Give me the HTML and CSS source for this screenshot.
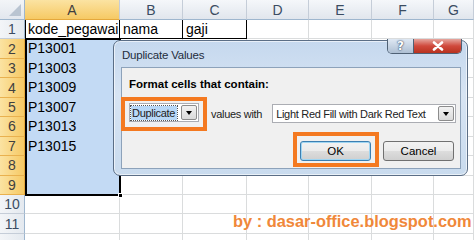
FILE: index.html
```html
<!DOCTYPE html>
<html>
<head>
<meta charset="utf-8">
<link rel="stylesheet" href="styles.css">
</head>
<body>
<div class="screen">
  <div class="sheet">
    <div class="corner"><span class="tri"></span></div>
    <div class="ch selh">A</div><div class="ch">B</div><div class="ch">C</div><div class="ch">D</div><div class="ch">E</div><div class="ch">F</div><div class="ch">G</div>

    <div class="rh">1</div><div class="c tb first">kode_pegawai</div><div class="c tb">nama</div><div class="c tb">gaji</div><div class="c"></div><div class="c"></div><div class="c"></div><div class="c"></div>
    <div class="rh selh">2</div><div class="c sel">P13001</div><div class="c"></div><div class="c"></div><div class="c"></div><div class="c"></div><div class="c"></div><div class="c"></div>
    <div class="rh selh">3</div><div class="c sel">P13003</div><div class="c"></div><div class="c"></div><div class="c"></div><div class="c"></div><div class="c"></div><div class="c"></div>
    <div class="rh selh">4</div><div class="c sel">P13009</div><div class="c"></div><div class="c"></div><div class="c"></div><div class="c"></div><div class="c"></div><div class="c"></div>
    <div class="rh selh">5</div><div class="c sel">P13007</div><div class="c"></div><div class="c"></div><div class="c"></div><div class="c"></div><div class="c"></div><div class="c"></div>
    <div class="rh selh">6</div><div class="c sel">P13013</div><div class="c"></div><div class="c"></div><div class="c"></div><div class="c"></div><div class="c"></div><div class="c"></div>
    <div class="rh selh">7</div><div class="c sel">P13015</div><div class="c"></div><div class="c"></div><div class="c"></div><div class="c"></div><div class="c"></div><div class="c"></div>
    <div class="rh selh">8</div><div class="c sel"></div><div class="c"></div><div class="c"></div><div class="c"></div><div class="c"></div><div class="c"></div><div class="c"></div>
    <div class="rh selh">9</div><div class="c sel"></div><div class="c"></div><div class="c"></div><div class="c"></div><div class="c"></div><div class="c"></div><div class="c"></div>
    <div class="rh">10</div><div class="c"></div><div class="c"></div><div class="c"></div><div class="c"></div><div class="c"></div><div class="c"></div><div class="c"></div>
    <div class="rh">11</div><div class="c"></div><div class="c"></div><div class="c"></div><div class="c"></div><div class="c"></div><div class="c"></div><div class="c"></div>
    <div class="rh"></div><div class="c"></div><div class="c"></div><div class="c"></div><div class="c"></div><div class="c"></div><div class="c"></div><div class="c"></div>
  </div>

  <div class="selbox"><span class="handle"></span></div>

  <div class="dialog">
    <div class="titlebar">
      <span class="title">Duplicate Values</span>
      <div class="capbtns">
        <span class="help">?</span>
        <span class="close">
          <svg width="14" height="10" viewBox="0 0 14 10"><path d="M3 1.5 L11 8.5 M11 1.5 L3 8.5" stroke="#fff" stroke-width="2.6" stroke-linecap="round"/></svg>
        </span>
      </div>
    </div>
    <div class="panel">
      <div class="label">Format cells that contain:</div>
      <div class="row">
        <div class="combo small hl">
          <span class="field"><span class="selected">Duplicate</span></span>
          <span class="drop"><span class="arrow"></span></span>
        </div>
        <span class="vw">values with</span>
        <div class="combo big">
          <span class="field">Light Red Fill with Dark Red Text</span>
          <span class="drop"><span class="arrow"></span></span>
        </div>
      </div>
      <div class="buttons">
        <button class="btn ok hl2">OK</button>
        <button class="btn">Cancel</button>
      </div>
    </div>
  </div>

  <div class="credit">by : dasar-office.blogspot.com</div>
</div>
</body>
</html>
```
FILE: styles.css
```css
* { box-sizing: border-box; }
html, body { margin: 0; padding: 0; background: #fff; }
.screen {
  position: relative;
  width: 474px;
  height: 240px;
  overflow: hidden;
  font-family: "Liberation Sans", Arial, sans-serif;
}
.sheet {
  display: grid;
  grid-template-columns: 25px 95px 63px 64px 62px 63px 62px 40px;
  grid-template-rows: 20px repeat(12, 19.45px);
}
.corner {
  position: relative;
  background: linear-gradient(#f3f5f8, #e2e7ee);
  border-right: 1px solid #9eb6ce;
  border-bottom: 1px solid #9eb6ce;
}
.tri {
  position: absolute;
  right: 3px;
  bottom: 3px;
  width: 0; height: 0;
  border-left: 12px solid transparent;
  border-bottom: 12px solid #b9c4d1;
}
.ch {
  background: linear-gradient(#f5f7fa, #e1e6ed);
  border-right: 1px solid #c5cdd8;
  border-bottom: 1px solid #9eb6ce;
  color: #3b4c62;
  font-size: 14px;
  display: flex;
  align-items: center;
  justify-content: center;
  padding-top: 1px;
}
.rh {
  background: linear-gradient(90deg, #f3f5f8, #e4e9ef);
  border-right: 1px solid #9eb6ce;
  border-bottom: 1px solid #c5cdd8;
  color: #3b4c62;
  font-size: 14px;
  display: flex;
  align-items: center;
  justify-content: center;
}
.ch.selh { background: linear-gradient(#fbe3a2, #f6c964); color: #3f3f3f; border-bottom-color: #e4a83c; }
.rh.selh { background: linear-gradient(90deg, #fbe3a2, #f6c964); color: #3f3f3f; border-right-color: #e4a83c; border-bottom-color: #e9b14f; }
.c {
  border-right: 1px solid #dadcdd;
  border-bottom: 1px solid #dadcdd;
  font-size: 14px;
  line-height: 18px;
  padding-left: 3px;
  color: #000;
  white-space: nowrap;
  overflow: hidden;
}
.c.tb { border-right: 1px solid #000; border-bottom: 1px solid #000; }
.c.tb.first { border-left: 1px solid #000; padding-left: 2px; }
.c.sel { background: #c3daf4; border-right: none; border-bottom: 1px solid #c3daf4; }

.selbox {
  position: absolute;
  left: 25px;
  top: 39px;
  width: 96px;
  height: 157px;
  border: 2px solid #000;
  border-top-width: 1px;
}
.handle {
  position: absolute;
  right: -4px;
  bottom: -4px;
  width: 5px; height: 5px;
  background: #000;
  border: 1px solid #fff;
}

.dialog {
  position: absolute;
  left: 113px;
  top: 40px;
  width: 355px;
  height: 136px;
  border: 1px solid #5b6e86;
  border-radius: 7px;
  background: linear-gradient(#c5d8ee, #d7e4f3 40%, #c9dbee);
  box-shadow: 0 0 0 1px rgba(255,255,255,0.6) inset;
  padding: 0 6px 6px 7px;
  display: flex;
  flex-direction: column;
}
.titlebar {
  height: 26px;
  flex: none;
  display: flex;
  align-items: center;
  position: relative;
}
.title {
  font-size: 11.5px;
  letter-spacing: -0.2px;
  color: #1e2c3c;
  padding-left: 1px;
  padding-top: 1px;
}
.capbtns {
  position: absolute;
  right: -1px;
  top: -2px;
  display: flex;
  border: 1px solid #4f6175;
  border-top: none;
  border-radius: 0 0 5px 5px;
  overflow: hidden;
  height: 15px;
}
.help {
  width: 26px;
  background: linear-gradient(#dfe8f3, #aebfd3);
  border-right: 1px solid #4f6175;
  color: #fff;
  font: bold 12px "DejaVu Sans", sans-serif;
  text-align: center;
  line-height: 14px;
  text-shadow: 0 0 2px #2c4160, 0 0 1px #2c4160;
}
.close {
  width: 47px;
  background: linear-gradient(#e6a79f, #d0493c 50%, #b8321f);
  display: flex;
  align-items: center;
  justify-content: center;
}
.panel {
  flex: 1;
  background: #f0f0f0;
  border: 1px solid #8da2ba;
  padding: 8px 0 0 7px;
  font-size: 11px;
  color: #000;
}
.label {
  font-weight: bold;
  font-size: 11.5px;
  height: 16px;
  line-height: 16px;
}
.row {
  display: flex;
  align-items: center;
  margin-top: 11px;
  height: 19px;
  white-space: nowrap;
}
.combo {
  display: flex;
  flex: none;
  height: 19px;
  background: #fff;
  border: 1px solid #abadb3;
  position: relative;
}
.combo.small { width: 70px; }
.combo.big { width: 184px; margin-left: 10px; margin-top: 2px; }
.field {
  flex: 1;
  display: flex;
  align-items: center;
  padding-left: 3px;
  font-size: 11px;
  letter-spacing: -0.3px;
  white-space: nowrap;
  overflow: hidden;
  color: #222;
}
.combo.small .field { padding-left: 1px; }
.selected {
  background: #b8d8f7;
  outline: 1px dotted #555;
  padding: 0 2px 0 1px;
  line-height: 14px;
}
.drop {
  width: 16px;
  flex: none;
  margin: 1px;
  border: 1px solid #8c8c8c;
  border-radius: 2px;
  background: linear-gradient(#f2f2f2, #dadada);
  display: flex;
  align-items: center;
  justify-content: center;
}
.combo.small .drop { margin-left: 3px; }
.arrow {
  width: 0; height: 0;
  border-left: 3.5px solid transparent;
  border-right: 3.5px solid transparent;
  border-top: 4px solid #000;
  margin-top: 1px;
}
.vw { margin-left: 12px; font-size: 11px; letter-spacing: -0.3px; color: #222; padding-top: 2px; flex: none; }
.hl::after, .hl2::after {
  content: "";
  position: absolute;
  border: 4px solid #f47920;
}
.hl::after { left: -9px; right: -9px; top: -7px; bottom: -10px; }
.buttons {
  display: flex;
  justify-content: flex-end;
  gap: 12px;
  margin-top: 19px;
  padding-right: 6px;
}
.btn {
  position: relative;
  width: 71px;
  height: 20px;
  border: 1px solid #707070;
  border-radius: 3px;
  background: linear-gradient(#f2f2f2 0%, #ebebeb 50%, #dddddd 51%, #cfcfcf 100%);
  font-family: "Liberation Sans", Arial, sans-serif;
  font-size: 11.5px;
  color: #000;
  padding: 0;
  line-height: 17px;
}
.btn.ok { border-color: #3c7fb1; box-shadow: inset 0 0 0 1px #9fd5f2; }
.hl2::after { left: -8px; right: -9px; top: -10px; bottom: -7px; }

.credit {
  position: absolute;
  left: 233px;
  top: 212px;
  font-weight: bold;
  font-size: 16.4px;
  color: #f0883a;
  white-space: nowrap;
}
```
